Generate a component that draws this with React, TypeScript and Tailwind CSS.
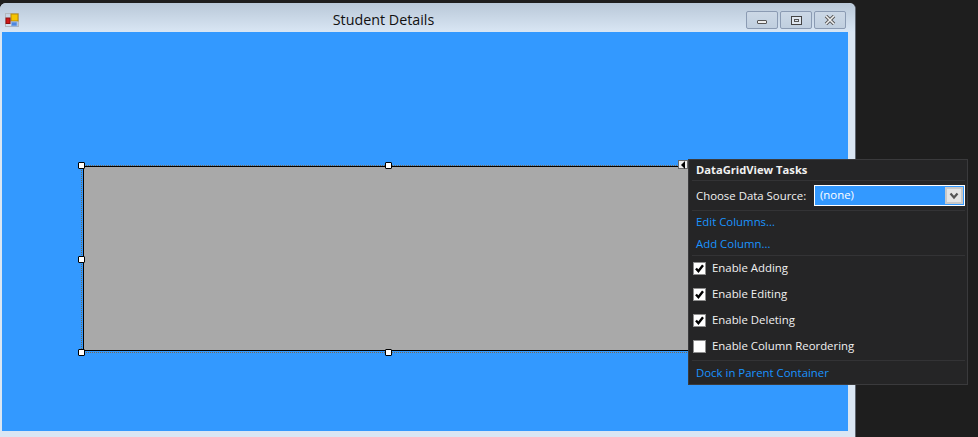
const font = { fontFamily: '"Open Sans", "Noto Sans", sans-serif' };

function WindowButton({ children }: { children: React.ReactNode }) {
  return (
    <div className="flex h-[18px] w-[32px] items-center justify-center rounded-[2px] border border-[#8b9bb3] bg-gradient-to-b from-[#ccd8e6] to-[#c0cfdf]">
      {children}
    </div>
  );
}

function TitleIcon() {
  return (
    <svg width="15" height="15" viewBox="0 0 15 15" className="shrink-0">
      <rect x="0.5" y="0.5" width="13" height="13" fill="none" stroke="#b3b8bd" />
      <rect x="6" y="1" width="7" height="7" fill="#f5c400" stroke="#b98a0a" />
      <rect x="1" y="5" width="4" height="5.5" fill="#d01818" stroke="#8e0f0f" />
      <rect x="6.5" y="9" width="5.5" height="4" fill="#4d87e0" stroke="#8fb0e0" />
    </svg>
  );
}

function Handle({ className }: { className: string }) {
  return <div className={`absolute h-[7px] w-[7px] rounded-[1px] border border-black bg-white ${className}`} />;
}

function Check({ label, checked }: { label: string; checked: boolean }) {
  return (
    <div className="flex h-[26px] items-center gap-[6px] pl-[1px]">
      <div className="flex h-[13px] w-[13px] items-center justify-center border border-[#8e8e8e] bg-white">
        {checked && (
          <svg width="11" height="11" viewBox="0 0 11 11">
            <path d="M2 5.5 L4.4 8.2 L9 2.2" fill="none" stroke="#000" strokeWidth="2.4" />
          </svg>
        )}
      </div>
      <span className="text-[11.4px] leading-none text-[#f1f1f1]">{label}</span>
    </div>
  );
}

function TaskPanel() {
  return (
    <div className="absolute left-[688px] top-[159px] flex h-[226px] w-[280px] flex-col border border-[#3a3a3c] bg-[#252526] pl-[3px] pr-[2px]" style={font}>
      <div className="flex h-[21px] items-center border-b border-[#333335] pl-[4px] text-[11.2px] font-bold text-[#f1f1f1]">
        DataGridView Tasks
      </div>
      <div className="flex h-[30px] items-center justify-between border-b border-[#333335] pl-[4px] text-[11.4px] text-[#f1f1f1]">
        <span>Choose Data Source:</span>
        <div className="flex h-[21px] w-[151px] border border-white bg-[#3399ff]">
          <span className="flex-1 pl-[5px] text-[11.4px] leading-[18px] text-white">(none)</span>
          <div className="my-[1px] mr-[1px] flex w-[18px] items-center justify-center border-2 border-[#c8c8c8] bg-[#e4e4e4]">
            <svg width="10" height="8" viewBox="0 0 10 8">
              <path d="M1.5 1.5 L5 5.5 L8.5 1.5" fill="none" stroke="#555" strokeWidth="2.2" />
            </svg>
          </div>
        </div>
      </div>
      <div className="flex h-[22px] items-center pl-[4px] text-[11.4px] text-[#1a94ff]">Edit Columns...</div>
      <div className="flex h-[23px] items-center border-b border-[#333335] pl-[4px] text-[11.4px] text-[#1a94ff]">Add Column...</div>
      <div className="-mt-[1px]">
        <Check label="Enable Adding" checked />
        <Check label="Enable Editing" checked />
        <Check label="Enable Deleting" checked />
        <Check label="Enable Column Reordering" checked={false} />
      </div>
      <div className="mt-[1px] flex h-[24px] items-center border-t border-[#333335] pl-[4px] text-[11.4px] text-[#1a94ff]">
        Dock in Parent Container
      </div>
    </div>
  );
}

export default function App() {
  return (
    <div className="relative h-[437px] w-[978px] overflow-hidden bg-[#1e1e1e]" style={font}>
      <div className="h-[3px]" />
      <div className="flex h-[434px] w-[856px] flex-col rounded-t-[6px] border-r border-[#5f6670] bg-[#dae6f3]">
        <div className="flex h-[29px] items-center rounded-t-[6px] bg-gradient-to-b from-[#b9c8d8] to-[#d9e6f4] pl-[5px] pr-[9px] pt-[5px]">
          <TitleIcon />
          <div className="flex-1 pl-[1px] text-center text-[14.3px] text-[#111]">Student Details</div>
          <div className="flex gap-[2px]">
            <WindowButton>
              <div className="mt-[3px] h-[4px] w-[10px] rounded-[1px] border border-[#555] bg-[#eee]" />
            </WindowButton>
            <WindowButton>
              <div className="flex h-[9px] w-[11px] items-center justify-center border border-[#444] bg-[#dfe6ef]">
                <div className="h-[3px] w-[5px] border border-[#555]" />
              </div>
            </WindowButton>
            <WindowButton>
              <svg width="12" height="10" viewBox="0 0 12 10">
                <path d="M2 1 L10 9 M10 1 L2 9" stroke="#555" strokeWidth="3.4" />
                <path d="M2 1 L10 9 M10 1 L2 9" stroke="#f1f1f1" strokeWidth="1.6" />
              </svg>
            </WindowButton>
          </div>
        </div>
        <div className="ml-[2px] h-[399px] w-[846px] bg-[#3399ff] pl-[81px] pt-[134px]">
          <div className="h-[185px] w-[620px] border-y border-l border-black bg-[#a9a9a9]" />
        </div>
      </div>

      {/* selection frame drawn over the designer */}
      <div className="absolute left-[81px] top-[165px] h-[188px] w-[614px] border border-dotted border-[#7a6a50]" />
      <Handle className="left-[78px] top-[162px]" />
      <Handle className="left-[385px] top-[162px]" />
      <Handle className="left-[78px] top-[256px]" />
      <Handle className="left-[78px] top-[349px]" />
      <Handle className="left-[385px] top-[349px]" />
      <div className="absolute left-[678px] top-[160px] flex h-[9px] w-[10px] items-center justify-center border border-[#6a6a6a] bg-[#eeeeee]">
        <div className="h-0 w-0 border-y-[4px] border-r-[4px] border-y-transparent border-r-black" />
      </div>

      <TaskPanel />
    </div>
  );
}
